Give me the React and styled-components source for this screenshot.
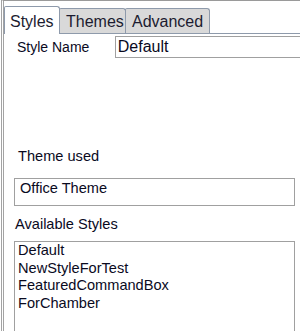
import React from "react";
import styled, { createGlobalStyle } from "styled-components";

const Global = createGlobalStyle`
  html, body { margin: 0; padding: 0; background: #ffffff; }
  body { font-family: "Liberation Sans", Arial, sans-serif; color: #0a0a1e; overflow: hidden; }
`;

const Frame = styled.div`
  width: 299px;
  height: 330px;
  margin-left: 1px;
  border-top: 1px solid #9a9a9a;
  border-left: 3px double #a3a3a3;
  overflow: hidden;
`;

const TabStrip = styled.div`
  box-sizing: border-box;
  height: 33px;
  display: flex;
  align-items: flex-end;
  border-bottom: 1px solid #8e9aab;
`;

const Tab = styled.div`
  box-sizing: border-box;
  flex-shrink: 0;
  width: ${(p) => p.$w}px;
  height: ${(p) => (p.$active ? 28 : 25)}px;
  margin-bottom: ${(p) => (p.$active ? -1 : 0)}px;
  margin-left: ${(p) => (p.$first ? 0 : -1)}px;
  padding: 0 0 ${(p) => (p.$active ? 3 : 2)}px ${(p) => p.$pl}px;
  display: flex;
  align-items: flex-end;
  border: 1px solid #8e9aab;
  border-bottom: none;
  border-radius: 2px 3px 0 0;
  background: ${(p) => (p.$active ? "#ffffff" : "#d9d9d9")};
  font-size: 16px;
  line-height: 18px;
  color: #1c1c30;
  position: relative;
  z-index: ${(p) => (p.$active ? 1 : 0)};
`;

const Panel = styled.div`
  display: flex;
  flex-direction: column;
  padding-left: 10px;
  & > * { flex-shrink: 0; }
`;

const NameRow = styled.div`
  display: flex;
  align-items: baseline;
  margin-top: 2px;
`;

const NameLabel = styled.div`
  width: 104px;
  padding-left: 3px;
  font-size: 14px;
  line-height: 17px;
`;

const NameField = styled.div`
  box-sizing: border-box;
  width: 200px;
  height: 22px;
  border: 1px solid #a0a0a0;
  border-right: none;
  padding: 1px 0 0 2px;
  font-size: 16px;
  line-height: 18px;
`;

const SectionLabel = styled.div`
  margin-top: ${(p) => p.$mt}px;
  padding-left: ${(p) => p.$pl}px;
  font-size: 14.6px;
  line-height: 17px;
`;

const Box = styled.div`
  box-sizing: border-box;
  width: 281px;
  margin-top: ${(p) => p.$mt}px;
  border: 1px solid #a0a0a0;
  padding: ${(p) => p.$pt}px 0 0 ${(p) => p.$pl}px;
  font-size: 14.6px;
  line-height: ${(p) => p.$lh}px;
  height: ${(p) => p.$h}px;
`;

const Item = styled.div`
  white-space: nowrap;
`;

export default function App() {
  const styles = ["Default", "NewStyleForTest", "FeaturedCommandBox", "ForChamber"];
  return (
    <>
      <Global />
      <Frame>
        <TabStrip>
          <Tab $active $first $w={56} $pl={5}>Styles</Tab>
          <Tab $w={67} $pl={6}>Themes</Tab>
          <Tab $w={85} $pl={6}>Advanced</Tab>
        </TabStrip>
        <Panel>
          <NameRow>
            <NameLabel>Style Name</NameLabel>
            <NameField>Default</NameField>
          </NameRow>
          <SectionLabel $mt={90} $pl={4}>Theme used</SectionLabel>
          <Box $mt={13} $h={28} $pt={1} $pl={5} $lh={17}>Office Theme</Box>
          <SectionLabel $mt={10} $pl={1}>Available Styles</SectionLabel>
          <Box $mt={8} $h={110} $pt={0} $pl={3} $lh={17.7}>
            {styles.map((s) => (
              <Item key={s}>{s}</Item>
            ))}
          </Box>
        </Panel>
      </Frame>
    </>
  );
}
